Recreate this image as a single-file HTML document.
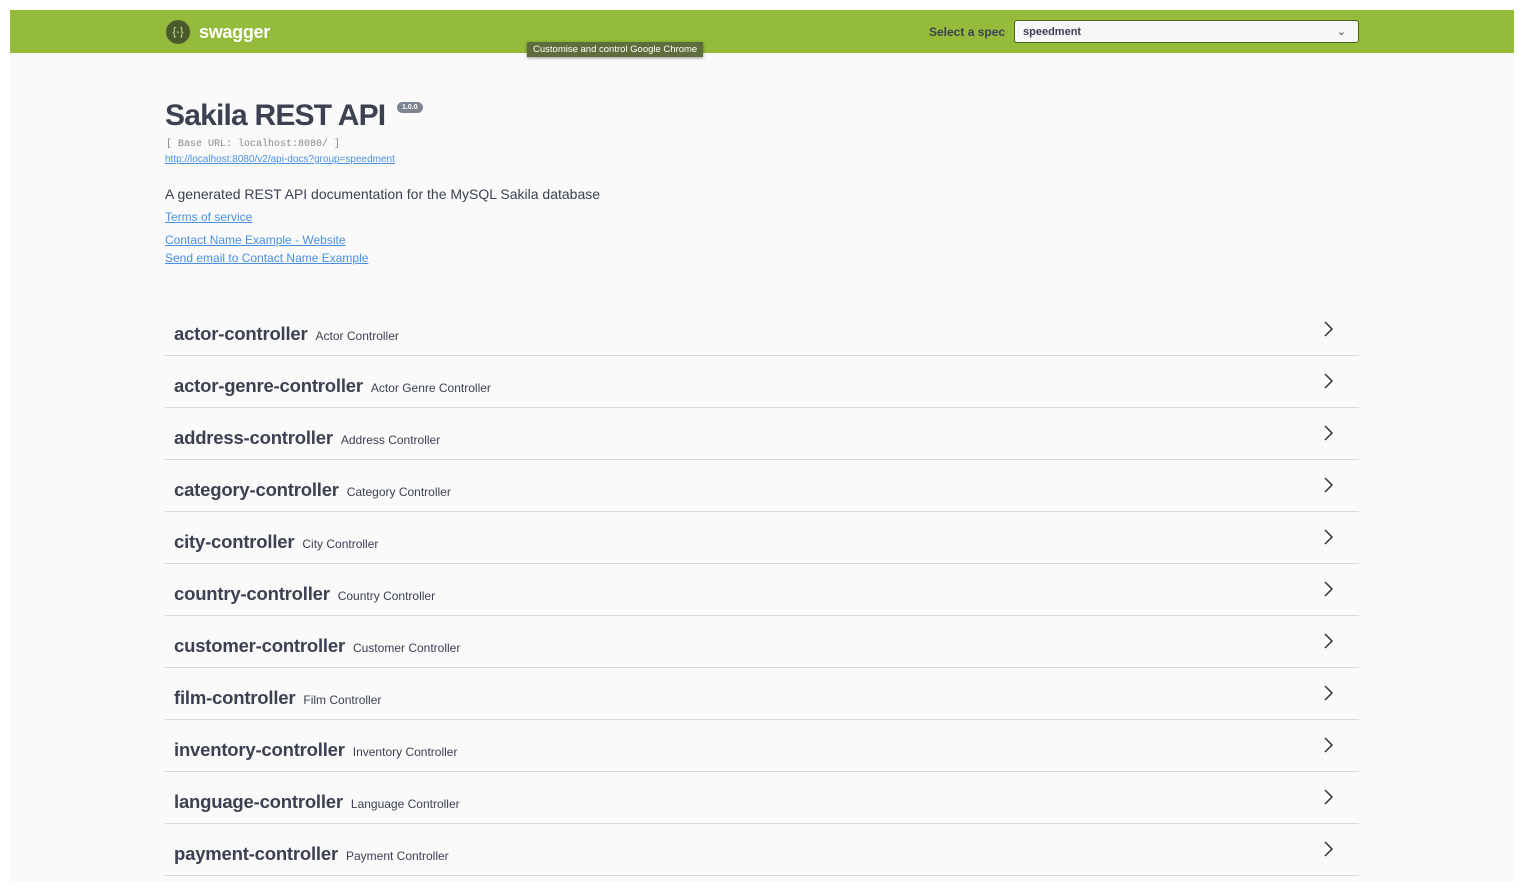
<!DOCTYPE html>
<html><head><meta charset="utf-8"><style>
body{margin:0;background:#fff;font-family:"Liberation Sans",sans-serif;color:#3b4151;width:1522px;height:892px;overflow:hidden;position:relative}
.page{position:absolute;left:10px;top:10px;width:1504px;height:872px;background:#fafafa}
.top{position:absolute;left:0;top:0;width:1504px;height:43px;background:#94bb3a}
.logo{position:absolute;left:156px;top:10px;width:24px;height:24px;border-radius:50%;background:#4a5a2a;color:#cfe0a0;font-size:11px;text-align:center;line-height:24px}
.brand{position:absolute;left:189px;top:12px;color:#fff;font-weight:bold;font-size:18px;letter-spacing:-0.3px}
.tip{position:absolute;left:517px;top:32px;background:#5e6d3c;color:#fff;font-size:9.5px;padding:2px 6px;box-shadow:0 1px 3px rgba(0,0,0,.4)}
.sel-l{position:absolute;left:919px;top:15px;font-weight:bold;font-size:12px;color:#3b4151}
.sel{position:absolute;left:1004px;top:10px;height:23px;border:1px solid #4a6a1a;border-radius:3px;background:#f7f7f7;font-size:11px;font-weight:bold;line-height:22px;padding-left:8px;box-sizing:border-box;width:345px}
.sel span{position:absolute;right:12px;top:0;font-weight:normal}
h1{position:absolute;left:155px;top:89px;margin:0;font-size:30px;font-weight:bold;color:#3b4151;letter-spacing:-0.8px}
.ver{position:absolute;left:387px;top:92px;background:#7d8492;color:#fff;font-size:7px;font-weight:bold;border-radius:8px;padding:2px 5px}
.base{position:absolute;left:156px;top:129px;font-family:"Liberation Mono",monospace;font-size:10px;color:#888}
a{color:#4990e2;text-decoration:underline;font-size:12px;position:absolute;left:155px}
.desc{position:absolute;left:155px;top:176px;font-size:14px;color:#3b4151}
.row{position:absolute;left:155px;width:1194px;height:52px;border-bottom:1px solid #d8d9db}
.row b{position:absolute;left:9px;top:20px;font-size:18.5px;color:#3b4151;letter-spacing:-0.2px}
.row i{font-style:normal;font-weight:normal;font-size:12px;margin-left:8px;letter-spacing:0}
.chev{position:absolute;right:25px;top:18px}
</style></head><body><div class="page">
<div class="top"><div class="logo">{-}</div><div class="brand">swagger</div>
<div class="sel-l">Select a spec</div><div class="sel">speedment<span>&#8964;</span></div></div>
<div class="tip">Customise and control Google Chrome</div>
<h1>Sakila REST API</h1><div class="ver">1.0.0</div>
<div class="base">[ Base URL: localhost:8080/ ]</div>
<a style="top:144px;font-size:10px">http://localhost:8080/v2/api-docs?group=speedment</a>
<div class="desc">A generated REST API documentation for the MySQL Sakila database</div>
<a style="top:200px">Terms of service</a>
<a style="top:223px">Contact Name Example - Website</a>
<a style="top:241px">Send email to Contact Name Example</a>
<div class="row" style="top:293px"><b>actor-controller<i>Actor Controller</i></b><svg class="chev" width="10" height="16"><path d="M1 1l7 7-7 7" stroke="#333" fill="none" stroke-width="1.5"/></svg></div>
<div class="row" style="top:345px"><b>actor-genre-controller<i>Actor Genre Controller</i></b><svg class="chev" width="10" height="16"><path d="M1 1l7 7-7 7" stroke="#333" fill="none" stroke-width="1.5"/></svg></div>
<div class="row" style="top:397px"><b>address-controller<i>Address Controller</i></b><svg class="chev" width="10" height="16"><path d="M1 1l7 7-7 7" stroke="#333" fill="none" stroke-width="1.5"/></svg></div>
<div class="row" style="top:449px"><b>category-controller<i>Category Controller</i></b><svg class="chev" width="10" height="16"><path d="M1 1l7 7-7 7" stroke="#333" fill="none" stroke-width="1.5"/></svg></div>
<div class="row" style="top:501px"><b>city-controller<i>City Controller</i></b><svg class="chev" width="10" height="16"><path d="M1 1l7 7-7 7" stroke="#333" fill="none" stroke-width="1.5"/></svg></div>
<div class="row" style="top:553px"><b>country-controller<i>Country Controller</i></b><svg class="chev" width="10" height="16"><path d="M1 1l7 7-7 7" stroke="#333" fill="none" stroke-width="1.5"/></svg></div>
<div class="row" style="top:605px"><b>customer-controller<i>Customer Controller</i></b><svg class="chev" width="10" height="16"><path d="M1 1l7 7-7 7" stroke="#333" fill="none" stroke-width="1.5"/></svg></div>
<div class="row" style="top:657px"><b>film-controller<i>Film Controller</i></b><svg class="chev" width="10" height="16"><path d="M1 1l7 7-7 7" stroke="#333" fill="none" stroke-width="1.5"/></svg></div>
<div class="row" style="top:709px"><b>inventory-controller<i>Inventory Controller</i></b><svg class="chev" width="10" height="16"><path d="M1 1l7 7-7 7" stroke="#333" fill="none" stroke-width="1.5"/></svg></div>
<div class="row" style="top:761px"><b>language-controller<i>Language Controller</i></b><svg class="chev" width="10" height="16"><path d="M1 1l7 7-7 7" stroke="#333" fill="none" stroke-width="1.5"/></svg></div>
<div class="row" style="top:813px"><b>payment-controller<i>Payment Controller</i></b><svg class="chev" width="10" height="16"><path d="M1 1l7 7-7 7" stroke="#333" fill="none" stroke-width="1.5"/></svg></div>
</div></body></html>
